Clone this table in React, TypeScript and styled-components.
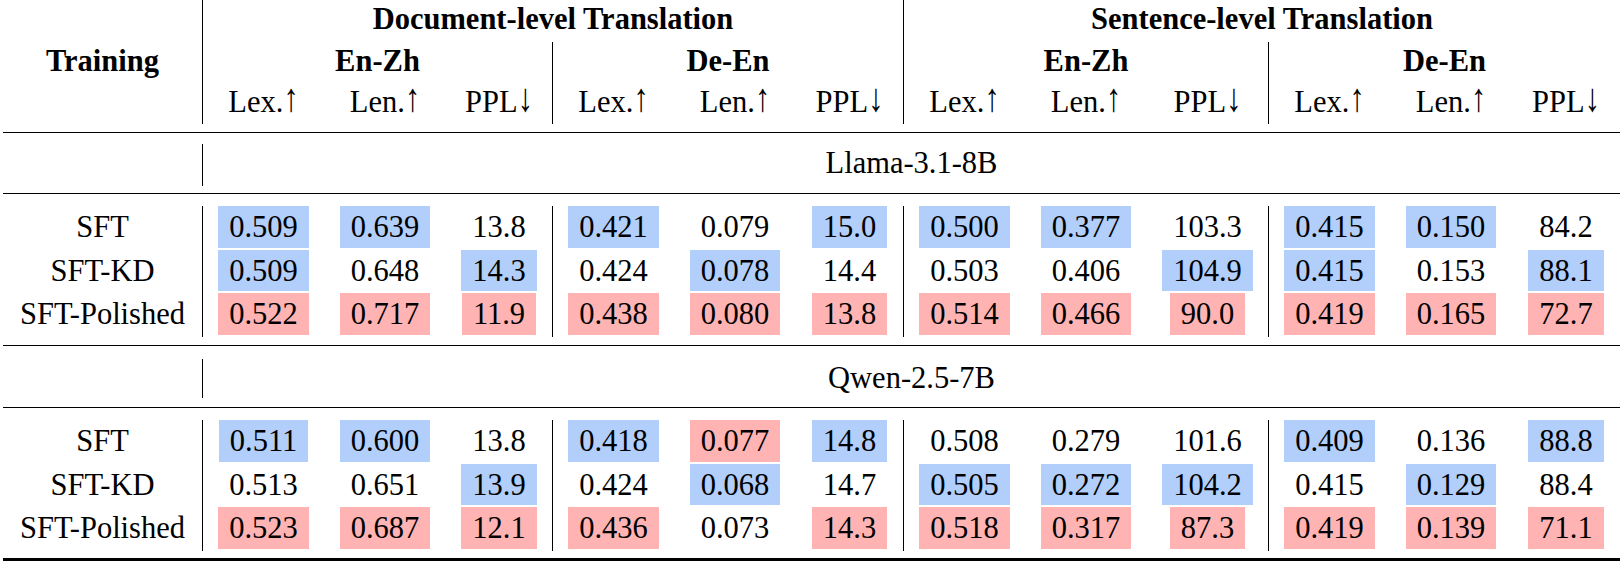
import React from 'react';
import styled, { createGlobalStyle } from 'styled-components';

const GlobalStyle = createGlobalStyle`
  html, body { margin: 0; padding: 0; background: #ffffff; }
  body {
    font-family: "Liberation Serif", "Times New Roman", serif;
    color: #000000;
  }
`;

const COLS = [199, 122, 122, 106, 122, 122, 107, 122, 122, 121, 122, 122, 108];

const Page = styled.div`
  width: 1623px;
  height: 561px;
  box-sizing: border-box;
  padding-left: 3px;
  overflow: hidden;
`;

const Table = styled.div`
  display: grid;
  grid-template-columns: ${COLS.map((c) => `${c}px`).join(' ')};
  font-size: 30.5px;
`;

const Corner = styled.div`
  grid-column: 1;
  grid-row: 1 / span 3;
  display: flex;
  align-items: center;
  justify-content: center;
  padding-bottom: 2.6px;
  box-sizing: border-box;
  font-weight: 700;
  line-height: 38px;
  white-space: nowrap;
`;

const HeadCell = styled.div<{ $span?: number; $sep?: boolean; $h: number; $bold?: boolean }>`
  grid-column: span ${(p) => p.$span ?? 1};
  height: ${(p) => p.$h}px;
  box-sizing: border-box;
  border-left: ${(p) => (p.$sep ? '1px solid #000' : 'none')};
  line-height: 38px;
  text-align: center;
  white-space: nowrap;
  font-weight: ${(p) => (p.$bold ? 700 : 400)};
`;

const Arrow = styled.span`
  display: inline-block;
  transform: translateY(2px) scaleY(1.3);
  transform-origin: 50% 100%;
`;

const RuleRow = styled.div<{ $above: number; $below: number }>`
  grid-column: 1 / -1;
  padding-top: ${(p) => p.$above}px;
  padding-bottom: ${(p) => p.$below}px;
`;

const RuleLine = styled.div<{ $weight: number }>`
  height: ${(p) => p.$weight}px;
  background: #000;
`;

const ModelSpacer = styled.div<{ $h: number }>`
  grid-column: 1;
  height: ${(p) => p.$h}px;
`;

const ModelCell = styled.div<{ $h: number }>`
  grid-column: span 12;
  height: ${(p) => p.$h}px;
  box-sizing: border-box;
  border-left: 1px solid #000;
  line-height: 38px;
  text-align: center;
  white-space: nowrap;
`;

const BodyCell = styled.div<{ $sep?: boolean }>`
  height: 43.6px;
  box-sizing: border-box;
  border-left: ${(p) => (p.$sep ? '1px solid #000' : 'none')};
  text-align: center;
  white-space: nowrap;
`;

const TONES: Record<string, string> = {
  b: '#b2cefb',
  r: '#ffb3b3',
  '': 'transparent',
};

const Value = styled.span<{ $tone: string }>`
  display: inline-block;
  vertical-align: top;
  height: 41.8px;
  box-sizing: border-box;
  padding: 2px 11px 0;
  line-height: 39.8px;
  background: ${(p) => TONES[p.$tone]};
`;

type Block = { model: string; modelH: number; rows: [string, string[]][] };

const blocks: Block[] = [
  {
    model: 'Llama-3.1-8B',
    modelH: 42,
    rows: [
      ['SFT', ['0.509b', '0.639b', '13.8', '0.421b', '0.079', '15.0b', '0.500b', '0.377b', '103.3', '0.415b', '0.150b', '84.2']],
      ['SFT-KD', ['0.509b', '0.648', '14.3b', '0.424', '0.078b', '14.4', '0.503', '0.406', '104.9b', '0.415b', '0.153', '88.1b']],
      ['SFT-Polished', ['0.522r', '0.717r', '11.9r', '0.438r', '0.080r', '13.8r', '0.514r', '0.466r', '90.0r', '0.419r', '0.165r', '72.7r']],
    ],
  },
  {
    model: 'Qwen-2.5-7B',
    modelH: 39.6,
    rows: [
      ['SFT', ['0.511b', '0.600b', '13.8', '0.418b', '0.077r', '14.8b', '0.508', '0.279', '101.6', '0.409b', '0.136', '88.8b']],
      ['SFT-KD', ['0.513', '0.651', '13.9b', '0.424', '0.068b', '14.7', '0.505b', '0.272b', '104.2b', '0.415', '0.129b', '88.4']],
      ['SFT-Polished', ['0.523r', '0.687r', '12.1r', '0.436r', '0.073', '14.3r', '0.518r', '0.317r', '87.3r', '0.419r', '0.139r', '71.1r']],
    ],
  },
];

const METRICS: [string, string][] = [
  ['Lex.', '\u2191'],
  ['Len.', '\u2191'],
  ['PPL', '\u2193'],
];
const PAIRS = ['En-Zh', 'De-En', 'En-Zh', 'De-En'];

const rulesBefore = [
  { above: 8.5, below: 10.5 },
  { above: 8, below: 12.9 },
];
const rulesAfterModel = [
  { above: 7, below: 12 },
  { above: 8.5, below: 12.2 },
];

function parse(cell: string): [string, string] {
  const last = cell.slice(-1);
  if (last === 'b' || last === 'r') return [cell.slice(0, -1), last];
  return [cell, ''];
}

export default function App() {
  return (
    <Page>
      <GlobalStyle />
      <Table>
        <Corner>Training</Corner>
        <HeadCell $span={6} $sep $h={41.7} $bold>Document-level Translation</HeadCell>
        <HeadCell $span={6} $sep $h={41.7} $bold>Sentence-level Translation</HeadCell>

        {PAIRS.map((p, i) => (
          <HeadCell key={`p${i}`} $span={3} $sep $h={41.7} $bold>{p}</HeadCell>
        ))}

        {PAIRS.flatMap((_, g) =>
          METRICS.map(([name, arrow], k) => (
            <HeadCell key={`m${g}-${k}`} $sep={k === 0} $h={40.6}>
              {name}
              <Arrow>{arrow}</Arrow>
            </HeadCell>
          ))
        )}

        {blocks.map((b, bi) => (
          <React.Fragment key={b.model}>
            <RuleRow $above={rulesBefore[bi].above} $below={rulesBefore[bi].below}>
              <RuleLine $weight={1} />
            </RuleRow>
            <ModelSpacer $h={b.modelH} />
            <ModelCell $h={b.modelH}>{b.model}</ModelCell>
            <RuleRow $above={rulesAfterModel[bi].above} $below={rulesAfterModel[bi].below}>
              <RuleLine $weight={1} />
            </RuleRow>
            {b.rows.map(([label, vals]) => (
              <React.Fragment key={label}>
                <BodyCell>
                  <Value $tone="">{label}</Value>
                </BodyCell>
                {vals.map((v, ci) => {
                  const [text, tone] = parse(v);
                  return (
                    <BodyCell key={ci} $sep={ci % 3 === 0}>
                      <Value $tone={tone}>{text}</Value>
                    </BodyCell>
                  );
                })}
              </React.Fragment>
            ))}
          </React.Fragment>
        ))}

        <RuleRow $above={6.9} $below={0}>
          <RuleLine $weight={3.3} />
        </RuleRow>
      </Table>
    </Page>
  );
}
